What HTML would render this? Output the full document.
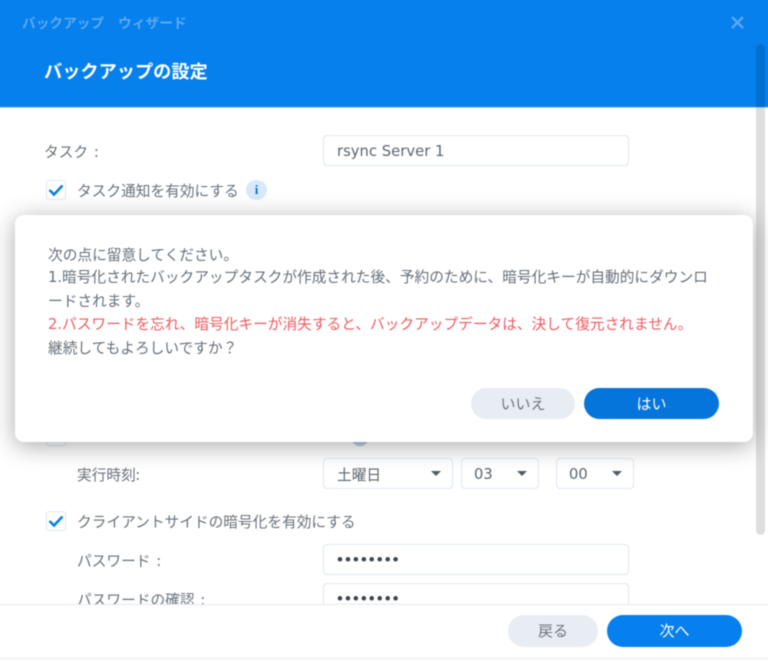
<!DOCTYPE html>
<html lang="ja"><head><meta charset="utf-8"><style>
html,body{margin:0;padding:0;background:#fff;overflow:hidden;width:768px;height:659px}
#p{position:absolute;left:-10px;top:-10px;width:788px;height:679px;overflow:hidden;background:#fff;font-family:"DejaVu Sans","Noto Sans CJK JP",sans-serif;color:#5b6570;filter:blur(.45px)}
#q{left:10px;top:10px;width:768px;height:659px}
#p div,#p svg{position:absolute}
.t{white-space:nowrap;font-size:14.7px;line-height:22px;font-family:"DejaVu Sans","Noto Sans CJK JP",sans-serif;font-weight:400}
.j{font-family:"Noto Sans CJK JP",sans-serif;word-spacing:3px}
.i{border:1px solid #dfe7f1;border-radius:4px;background:#fff;box-sizing:border-box}
.c{width:20px;height:20px;border:1px solid #dfe7f1;border-radius:3px;box-sizing:border-box;background:#fff}
.b{border-radius:16px;height:32px;line-height:31px;text-align:center;font-size:15px;font-family:"Noto Sans CJK JP",sans-serif}
.a{width:0;height:0;border-left:5px solid transparent;border-right:5px solid transparent;border-top:5px solid #525c68}
.d{font-family:"Liberation Sans",sans-serif;font-size:17px;letter-spacing:2px;color:#3c4650}
</style></head><body><div id="p"><div id="q">
<div style="left:-10px;top:-10px;width:788px;height:117px;background:#0580ed"></div>
<div style="left:-10px;top:107px;width:788px;height:1px;background:#b9d9f7"></div>
<div class="t j" style="left:22px;top:11px;font-size:13.7px;font-weight:700;color:#5fa9ef">バックアップ<span style="margin-left:14px">ウィザード</span></div>
<svg style="left:730px;top:15px" width="15" height="15" viewBox="0 0 15 15"><path d="M2 2L13 13M13 2L2 13" stroke="#5aa7f0" stroke-width="2.4" fill="none"/></svg>
<div class="t j" style="left:44px;top:60px;font-size:18.2px;font-weight:700;color:#fff">バックアップの設定</div>

<div class="t j" style="left:44px;top:141px;color:#68717b">タスク :</div>
<div class="i" style="left:323px;top:135px;width:306px;height:31px"></div>
<div class="t" style="left:337px;top:141px;font-size:14.8px">rsync Server 1</div>
<div class="c" style="left:46px;top:180px"></div>
<svg style="left:48px;top:183px" width="16" height="14" viewBox="0 0 16 14"><path d="M1.5 7L6 11.5L14.5 2.5" stroke="#0a7fe8" stroke-width="2.6" fill="none"/></svg>
<div class="t j" style="left:77px;top:180px;color:#68717b">タスク通知を有効にする</div>
<div style="left:246px;top:180px;width:21px;height:20px;border-radius:50%;background:#d8e9fb"></div>
<div class="t" style="left:246px;top:179px;width:21px;text-align:center;font-family:'Liberation Serif',serif;font-weight:700;font-size:13px;color:#0671d6">i</div>

<div class="c" style="left:46px;top:426px"></div>
<div style="left:351px;top:428px;width:18px;height:18px;border-radius:50%;background:#b5cfe8"></div>

<div class="t j" style="left:77px;top:464px;color:#68717b">実行時刻:</div>
<div class="i" style="left:323px;top:458px;width:130px;height:31px"></div>
<div class="t j" style="left:337px;top:464px">土曜日</div>
<div class="a" style="left:431px;top:471px"></div>
<div class="i" style="left:461px;top:458px;width:78px;height:31px"></div>
<div class="t" style="left:474px;top:464px">03</div>
<div class="a" style="left:517px;top:471px"></div>
<div class="i" style="left:556px;top:458px;width:78px;height:31px"></div>
<div class="t" style="left:569px;top:464px">00</div>
<div class="a" style="left:612px;top:471px"></div>

<div class="c" style="left:46px;top:511px"></div>
<svg style="left:48px;top:514px" width="16" height="14" viewBox="0 0 16 14"><path d="M1.5 7L6 11.5L14.5 2.5" stroke="#0a7fe8" stroke-width="2.6" fill="none"/></svg>
<div class="t j" style="left:77px;top:511px;color:#68717b">クライアントサイドの暗号化を有効にする</div>
<div class="t j" style="left:77px;top:550px;color:#68717b">パスワード :</div>
<div class="i" style="left:323px;top:544px;width:306px;height:31px"></div>
<div class="t d" style="left:337px;top:549px">••••••••</div>
<div class="t j" style="left:77px;top:589px;color:#68717b">パスワードの確認 :</div>
<div class="i" style="left:323px;top:583px;width:306px;height:31px"></div>
<div class="t d" style="left:337px;top:588px">••••••••</div>

<div style="left:756px;top:44px;width:9px;height:491px;border-radius:5px;background:rgba(0,0,0,.13)"></div>

<div style="left:-10px;top:604px;width:788px;background:#fff;border-top:1px solid #e3e9f1;border-bottom:1px solid #e3e9f1;box-sizing:content-box;height:53px"></div>
<div class="b" style="left:508px;top:615px;width:90px;background:#e8edf3;color:#6b747e">戻る</div>
<div class="b" style="left:607px;top:615px;width:135px;background:#0680ee;color:#fff">次へ</div>

<div style="left:15px;top:215px;width:738px;height:227px;background:#fff;border-radius:9px;box-shadow:0 4px 24px rgba(0,0,0,.34)"></div>
<div class="t j" style="left:48px;top:243.5px;line-height:22.75px;color:#666f79">次の点に留意してください。<br><span style="font-family:'DejaVu Sans'">1.</span>暗号化されたバックアップタスクが作成された後、予約のために、暗号化キーが自動的にダウンロ<br>ードされます。<br><span style="color:#ef5a5f"><span style="font-family:'DejaVu Sans'">2.</span>パスワードを忘れ、暗号化キーが消失すると、バックアップデータは、決して復元されません。</span><br>継続してもよろしいですか？</div>
<div class="b" style="left:471px;top:388px;width:104px;height:31px;background:#e8edf3;color:#6b747e">いいえ</div>
<div class="b" style="left:584px;top:388px;width:135px;height:31px;background:#0575dc;color:#fff">はい</div>
</div></div></body></html>
